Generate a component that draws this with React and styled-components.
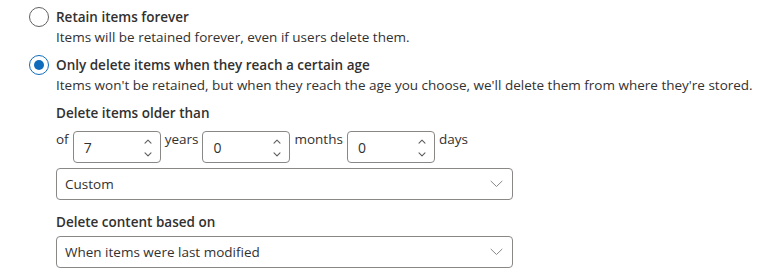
import React from "react";
import styled, { createGlobalStyle } from "styled-components";

const GlobalStyle = createGlobalStyle`
  body {
    margin: 0;
    background: #fff;
    font-family: "Segoe UI", "Open Sans", sans-serif;
    font-size: 13.5px;
    color: #323130;
  }
`;

const Page = styled.div`
  padding: 7px 0 0 29px;
`;

const RadioGroup = styled.div`
  display: flex;
  flex-direction: column;
  gap: 8px;
`;

const Option = styled.div`
  display: flex;
  gap: 7px;
  align-items: flex-start;
`;

const RadioCircle = styled.span`
  width: 20px;
  height: 20px;
  box-sizing: border-box;
  border-radius: 50%;
  border: 1px solid ${(p) => (p.checked ? "#0f6cbd" : "#616161")};
  display: flex;
  align-items: center;
  justify-content: center;
  flex-shrink: 0;

  &::after {
    content: "";
    width: 10px;
    height: 10px;
    border-radius: 50%;
    background: #0f6cbd;
    display: ${(p) => (p.checked ? "block" : "none")};
  }
`;

const OptionBody = styled.div`
  display: flex;
  flex-direction: column;
`;

const Label = styled.div`
  font-weight: 600;
  line-height: 20px;
`;

const Description = styled.div`
  line-height: 20px;
`;

const Settings = styled.div`
  display: flex;
  flex-direction: column;
  margin-top: 8px;
`;

const FieldLabel = styled.div`
  font-weight: 600;
  line-height: 20px;
  margin-top: ${(p) => p.top || 0}px;
`;

const SpinRow = styled.div`
  display: flex;
  align-items: flex-start;
  gap: 4px;
  margin-top: 8px;
`;

const Unit = styled.span`
  line-height: 16px;
`;

const SpinBox = styled.div`
  width: 88px;
  height: 32px;
  box-sizing: border-box;
  border: 1px solid #8a8886;
  border-radius: 4px;
  display: flex;
  align-items: center;
  justify-content: space-between;
  padding: 1px 8px 0 10px;
  font-size: 14px;
`;

const Arrows = styled.div`
  display: flex;
  flex-direction: column;
  gap: 8px;
`;

const Dropdown = styled.div`
  width: 457px;
  height: 32px;
  box-sizing: border-box;
  border: 1px solid #8a8886;
  border-radius: 4px;
  display: flex;
  align-items: center;
  justify-content: space-between;
  padding: 0 9px 0 8px;
  margin-top: ${(p) => p.top || 0}px;
  color: #323130;
`;

const Chevron = ({ up }) => (
  <svg width="8" height="5" viewBox="0 0 8 5" fill="none">
    <path
      d={up ? "M1 4.2L4 1.2L7 4.2" : "M1 0.8L4 3.8L7 0.8"}
      stroke="#605e5c"
      strokeWidth="1.1"
      strokeLinecap="round"
      strokeLinejoin="round"
    />
  </svg>
);

const DropChevron = () => (
  <svg width="13" height="8" viewBox="0 0 13 8" fill="none">
    <path
      d="M1 1.2L6.5 6.5L12 1.2"
      stroke="#8a8886"
      strokeWidth="1"
      strokeLinecap="round"
      strokeLinejoin="round"
    />
  </svg>
);

function Spin({ value }) {
  return (
    <SpinBox>
      <span>{value}</span>
      <Arrows>
        <Chevron up />
        <Chevron />
      </Arrows>
    </SpinBox>
  );
}

export default function App() {
  return (
    <>
      <GlobalStyle />
      <Page>
        <RadioGroup>
          <Option>
            <RadioCircle />
            <OptionBody>
              <Label>Retain items forever</Label>
              <Description>
                Items will be retained forever, even if users delete them.
              </Description>
            </OptionBody>
          </Option>
          <Option>
            <RadioCircle checked />
            <OptionBody>
              <Label>Only delete items when they reach a certain age</Label>
              <Description>
                Items won't be retained, but when they reach the age you
                choose, we'll delete them from where they're stored.
              </Description>
              <Settings>
                <FieldLabel>Delete items older than</FieldLabel>
                <SpinRow>
                  <Unit>of</Unit>
                  <Spin value="7" />
                  <Unit>years</Unit>
                  <Spin value="0" />
                  <Unit>months</Unit>
                  <Spin value="0" />
                  <Unit>days</Unit>
                </SpinRow>
                <Dropdown top={5}>
                  <span>Custom</span>
                  <DropChevron />
                </Dropdown>
                <FieldLabel top={12}>Delete content based on</FieldLabel>
                <Dropdown top={4}>
                  <span>When items were last modified</span>
                  <DropChevron />
                </Dropdown>
              </Settings>
            </OptionBody>
          </Option>
        </RadioGroup>
      </Page>
    </>
  );
}
